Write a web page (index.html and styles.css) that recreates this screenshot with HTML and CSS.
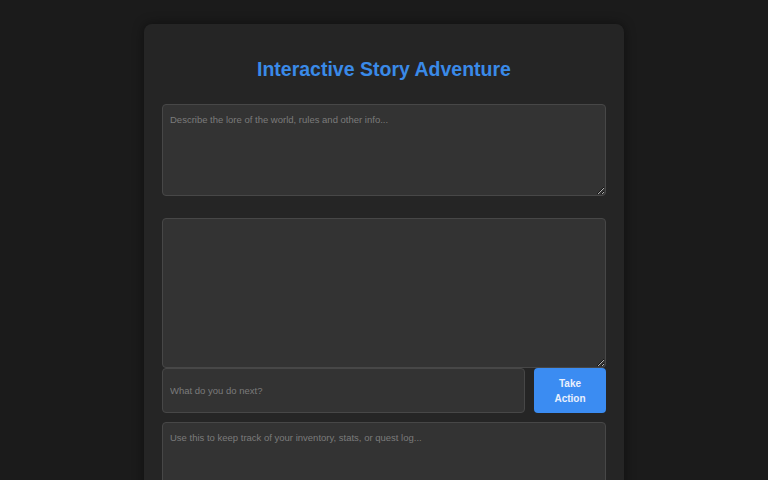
FILE: index.html
```html
<!DOCTYPE html>
<html lang="en">
<head>
<meta charset="utf-8">
<title>Interactive Story Adventure</title>
<link rel="stylesheet" href="styles.css">
</head>
<body>
<main class="container">
  <h1 class="title">Interactive Story Adventure</h1>
  <textarea class="box lore" placeholder="Describe the lore of the world, rules and other info..."></textarea>
  <div class="story-block">
    <textarea class="box story"></textarea>
    <div class="action-row">
      <input class="box action-input" type="text" placeholder="What do you do next?">
      <button class="action-btn">Take<br>Action</button>
    </div>
  </div>
  <textarea class="box notes" placeholder="Use this to keep track of your inventory, stats, or quest log..."></textarea>
</main>
</body>
</html>
```
FILE: styles.css
```css
html, body {
  margin: 0;
  padding: 0;
  background: #1b1b1b;
  font-family: "Liberation Sans", Arial, sans-serif;
}
body {
  padding-top: 24px;
}
.container {
  width: 480px;
  box-sizing: border-box;
  margin: 0 auto;
  background: #252525;
  border-radius: 8px;
  padding: 30px 18px 40px;
  box-shadow: 0 0 12px rgba(0,0,0,0.45);
  display: flex;
  flex-direction: column;
}
.title {
  margin: 0 0 20px;
  text-align: center;
  color: #3a8ae8;
  font-size: 19.5px;
  font-weight: bold;
  line-height: 30px;
}
.box {
  box-sizing: border-box;
  width: 100%;
  background: #333333;
  border: 1px solid #474747;
  border-radius: 4px;
  color: #dddddd;
  font-family: "Liberation Sans", Arial, sans-serif;
  font-size: 9.5px;
  padding: 9px 7px;
  margin: 0;
  display: block;
  outline: none;
}
.box::placeholder {
  color: #7b7b7b;
}
.lore {
  height: 92px;
  margin-bottom: 22px;
}
.story-block {
  display: flex;
  flex-direction: column;
  margin-bottom: 9px;
}
.story {
  height: 150px;
}
.action-row {
  display: flex;
  gap: 9px;
}
.action-input {
  flex: 1;
  height: 45px;
  padding: 0 7px;
}
.action-btn {
  width: 72px;
  height: 45px;
  flex: none;
  background: #3b8cf2;
  color: #e9f0fd;
  border: none;
  border-radius: 4px;
  font-family: "Liberation Sans", Arial, sans-serif;
  font-size: 10px;
  font-weight: bold;
  line-height: 15px;
  padding: 0;
}
.notes {
  height: 120px;
}
```
